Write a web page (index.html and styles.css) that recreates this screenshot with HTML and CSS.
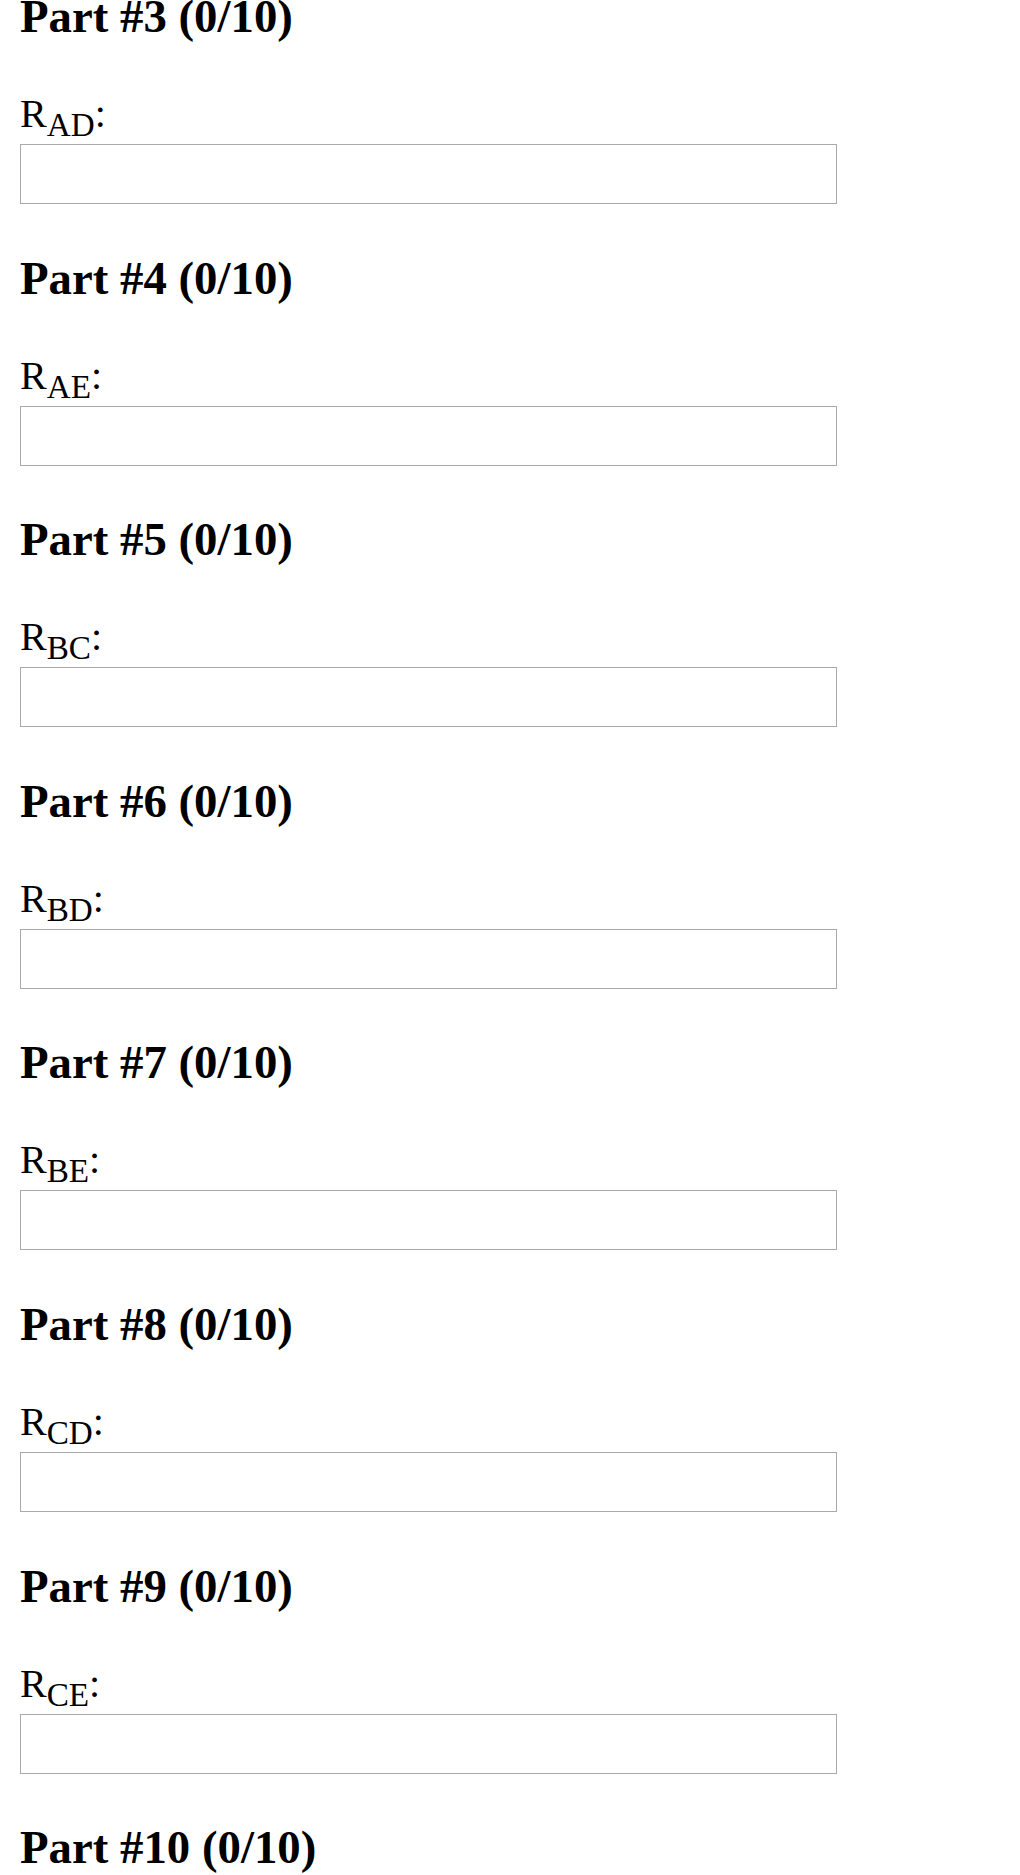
FILE: index.html
```html
<!DOCTYPE html>
<html>
<head>
<meta charset="utf-8">
<link rel="stylesheet" href="styles.css">
</head>
<body>
<div class="parts">
  <section class="part">
    <h3 class="part-title">Part #3 (0/10)</h3>
    <div class="label">R<sub>AD</sub>:</div>
    <input class="answer" type="text">
  </section>
  <section class="part">
    <h3 class="part-title">Part #4 (0/10)</h3>
    <div class="label">R<sub>AE</sub>:</div>
    <input class="answer" type="text">
  </section>
  <section class="part">
    <h3 class="part-title">Part #5 (0/10)</h3>
    <div class="label">R<sub>BC</sub>:</div>
    <input class="answer" type="text">
  </section>
  <section class="part">
    <h3 class="part-title">Part #6 (0/10)</h3>
    <div class="label">R<sub>BD</sub>:</div>
    <input class="answer" type="text">
  </section>
  <section class="part">
    <h3 class="part-title">Part #7 (0/10)</h3>
    <div class="label">R<sub>BE</sub>:</div>
    <input class="answer" type="text">
  </section>
  <section class="part">
    <h3 class="part-title">Part #8 (0/10)</h3>
    <div class="label">R<sub>CD</sub>:</div>
    <input class="answer" type="text">
  </section>
  <section class="part">
    <h3 class="part-title">Part #9 (0/10)</h3>
    <div class="label">R<sub>CE</sub>:</div>
    <input class="answer" type="text">
  </section>
  <section class="part">
    <h3 class="part-title">Part #10 (0/10)</h3>
  </section>
</div>
</body>
</html>
```

FILE: styles.css
```css
html, body {
  margin: 0;
  padding: 0;
  background: #fff;
}
body {
  font-family: "Liberation Serif", "Times New Roman", serif;
  color: #000;
  overflow: hidden;
}
.parts {
  display: flex;
  flex-direction: column;
  padding: 0 20px;
  margin-top: -10px;
}
.part {
  display: flex;
  flex-direction: column;
  align-items: flex-start;
  margin-bottom: 47.6px;
}
.part-title {
  margin: 0 0 50px 0;
  font-size: 46.8px;
  line-height: 52px;
  font-weight: bold;
}
.label {
  font-size: 40px;
  line-height: 44px;
  height: 44px;
  margin-bottom: 8px;
}
.label sub {
  font-size: 0.83em;
  line-height: 0;
  vertical-align: sub;
}
.answer {
  box-sizing: border-box;
  width: 817px;
  height: 60px;
  margin: 0;
  border: 1px solid #a9a9a9;
  background: #fff;
  font-size: 40px;
  padding: 0 4px;
  outline: none;
}
```
